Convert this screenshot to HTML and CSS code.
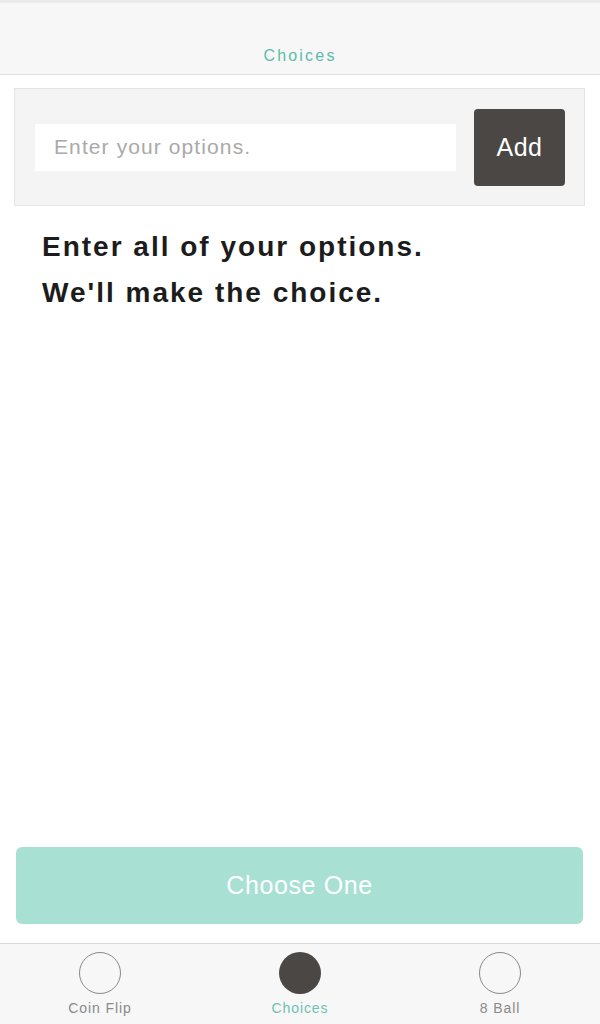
FILE: index.html
```html
<!DOCTYPE html>
<html>
<head>
<meta charset="utf-8">
<link rel="stylesheet" href="styles.css">
</head>
<body>
<div class="app">
  <div class="statusbar"></div>
  <header class="header"><span class="title">Choices</span></header>
  <main class="main">
    <div class="panel">
      <div class="input"><span class="placeholder">Enter your options.</span></div>
      <button class="add">Add</button>
    </div>
    <h1 class="intro">Enter all of your options.<br>We'll make the choice.</h1>
  </main>
  <div class="action">
    <button class="choose">Choose One</button>
  </div>
  <nav class="tabbar">
    <div class="tab"><span class="dot outline"></span><span class="label">Coin Flip</span></div>
    <div class="tab active"><span class="dot filled"></span><span class="label">Choices</span></div>
    <div class="tab"><span class="dot outline"></span><span class="label">8 Ball</span></div>
  </nav>
</div>
</body>
</html>
```
FILE: styles.css
```css
html, body { margin: 0; padding: 0; }
body { font-family: "Liberation Sans", Arial, sans-serif; background: #ffffff; }
.app { width: 600px; height: 1024px; display: flex; flex-direction: column; overflow: hidden; }
.statusbar { height: 3px; background: #ebebeb; }
.header {
  height: 72px; background: #f7f7f7; border-bottom: 1px solid #e0e0e0;
  display: flex; align-items: flex-end; justify-content: center; box-sizing: border-box; padding-bottom: 8px;
}
.title { color: #5bbcab; font-size: 16px; letter-spacing: 2.2px; line-height: 20px; }
.main { flex: 1; padding: 13px 15px 0 14px; }
.panel {
  height: 118px; box-sizing: border-box; background: #f4f4f4; border: 1px solid #e4e4e4;
  display: flex; align-items: center; padding: 0 19px 0 20px; gap: 18px;
}
.input { flex: 1; height: 47px; background: #ffffff; display: flex; align-items: center; padding-left: 19px; }
.placeholder { color: #a9a9a9; font-size: 21px; letter-spacing: 1.1px; }
.add {
  width: 91px; height: 77px; background: #4a4745; color: #ffffff; border: none; border-radius: 4px;
  font-family: "Liberation Sans", Arial, sans-serif; font-size: 25px; letter-spacing: 0.5px; padding: 0;
}
.intro {
  margin: 18px 0 0 28px; font-size: 28px; line-height: 46px; font-weight: bold; color: #1c1c1c; letter-spacing: 2px;
}
.action { padding: 0 17px 19px 16px; }
.choose {
  width: 100%; height: 77px; background: #a8e0d4; color: #ffffff; border: none; border-radius: 6px;
  font-family: "Liberation Sans", Arial, sans-serif; font-size: 25px; letter-spacing: 0.6px; padding: 0;
}
.tabbar {
  height: 81px; box-sizing: border-box; border-top: 1px solid #dadada; background: #f7f7f7;
  display: grid; grid-template-columns: 1fr 1fr 1fr;
}
.tab { display: flex; flex-direction: column; align-items: center; padding-top: 8px; }
.dot { width: 42px; height: 42px; border-radius: 50%; box-sizing: border-box; }
.dot.outline { border: 1.5px solid #8a8a8a; }
.dot.filled { background: #4a4745; }
.label { margin-top: 6px; font-size: 14px; letter-spacing: 0.9px; color: #8a8a8a; line-height: 16px; }
.tab.active .label { color: #6cc2b3; }
```
